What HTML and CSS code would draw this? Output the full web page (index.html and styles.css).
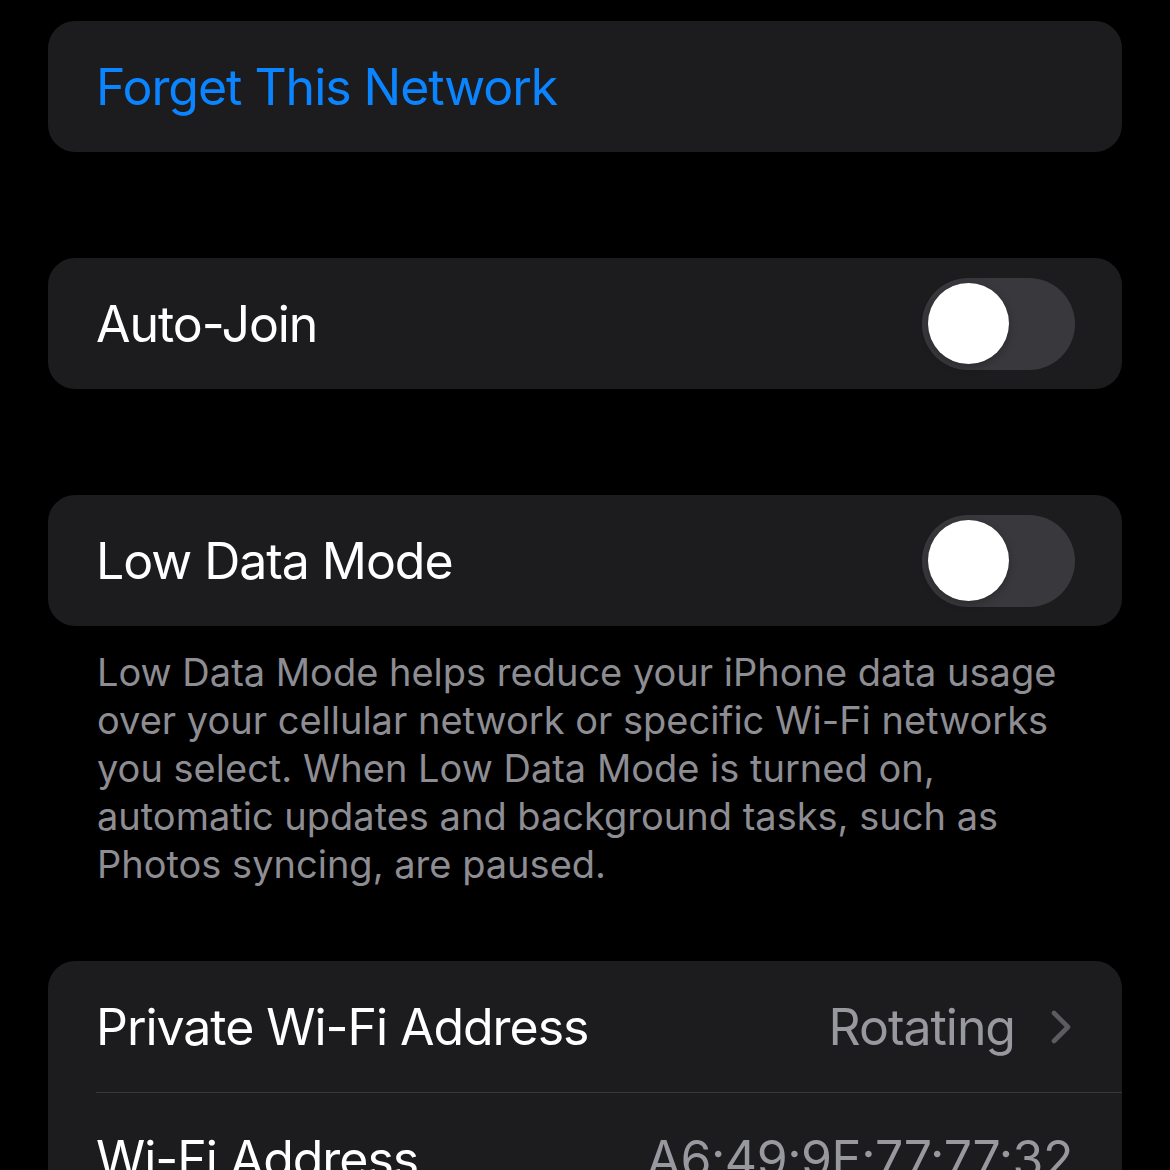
FILE: index.html
```html
<!DOCTYPE html>
<html lang="en">
<head>
<meta charset="utf-8">
<title>Wi-Fi Network</title>
<link rel="stylesheet" href="styles.css">
</head>
<body>
<main class="screen">
  <section class="group group-first">
    <div class="row"><span class="label label-link">Forget This Network</span></div>
  </section>

  <section class="group">
    <div class="row">
      <span class="label">Auto-Join</span>
      <span class="switch"><span class="knob"></span></span>
    </div>
  </section>

  <section class="group">
    <div class="row">
      <span class="label">Low Data Mode</span>
      <span class="switch"><span class="knob"></span></span>
    </div>
  </section>
  <p class="footer">Low Data Mode helps reduce your iPhone data usage over your cellular network or specific Wi-Fi networks you select. When Low Data Mode is turned on, automatic updates and background tasks, such as Photos syncing, are paused.</p>

  <section class="group group-last">
    <div class="row">
      <span class="label">Private Wi-Fi Address</span>
      <span class="value">Rotating</span>
      <svg class="chevron" viewBox="0 0 24 36" width="24" height="36" aria-hidden="true"><path d="M5 4 L19 18 L5 32" fill="none" stroke="#5b5b60" stroke-width="4.6" stroke-linecap="round" stroke-linejoin="round"/></svg>
    </div>
    <div class="separator"></div>
    <div class="row">
      <span class="label">Wi-Fi Address</span>
      <span class="value value-plain">A6:49:9E:77:77:32</span>
    </div>
  </section>
</main>
</body>
</html>
```

FILE: styles.css
```css
html, body {
  margin: 0;
  padding: 0;
  background: #000;
}
body {
  font-family: Inter, "Noto Sans", "Liberation Sans", sans-serif;
  color: #fff;
  -webkit-font-smoothing: antialiased;
  overflow: hidden;
  height: 1170px;
}
.screen {
  padding: 0 48px;
}
.group {
  background: #1c1c1e;
  border-radius: 27px;
  margin-top: 106px;
  overflow: hidden;
}
.group-first {
  margin-top: 21px;
}
.group-last {
  margin-top: 73px;
}
.row {
  height: 131px;
  display: flex;
  align-items: center;
  padding: 0 47px 0 48px;
}
.label {
  font-size: 50px;
  letter-spacing: -1.05px;
  flex: 1;
  white-space: nowrap;
}
.label-link {
  color: #0a84ff;
}
.value {
  font-size: 50px;
  letter-spacing: -1.05px;
  color: #98989f;
  margin-right: 34px;
  white-space: nowrap;
}
.value-plain {
  margin-right: 2px;
  letter-spacing: -0.5px;
}
.chevron {
  display: block;
  margin-right: 2px;
}
.switch {
  width: 153px;
  height: 92px;
  border-radius: 46px;
  background: #39393d;
  display: flex;
  align-items: center;
  padding: 0 6px;
  box-sizing: border-box;
}
.knob {
  width: 81px;
  height: 81px;
  border-radius: 50%;
  background: #fff;
  box-shadow: 0 3px 8px rgba(0, 0, 0, 0.25), 0 0 1px rgba(0, 0, 0, 0.2);
}
.separator {
  height: 1px;
  margin-left: 48px;
  background: #38383a;
}
.footer {
  margin: 0;
  padding: 22px 49px 0 49px;
  font-size: 38px;
  line-height: 48px;
  letter-spacing: 0;
  color: #8d8d93;
}
```
